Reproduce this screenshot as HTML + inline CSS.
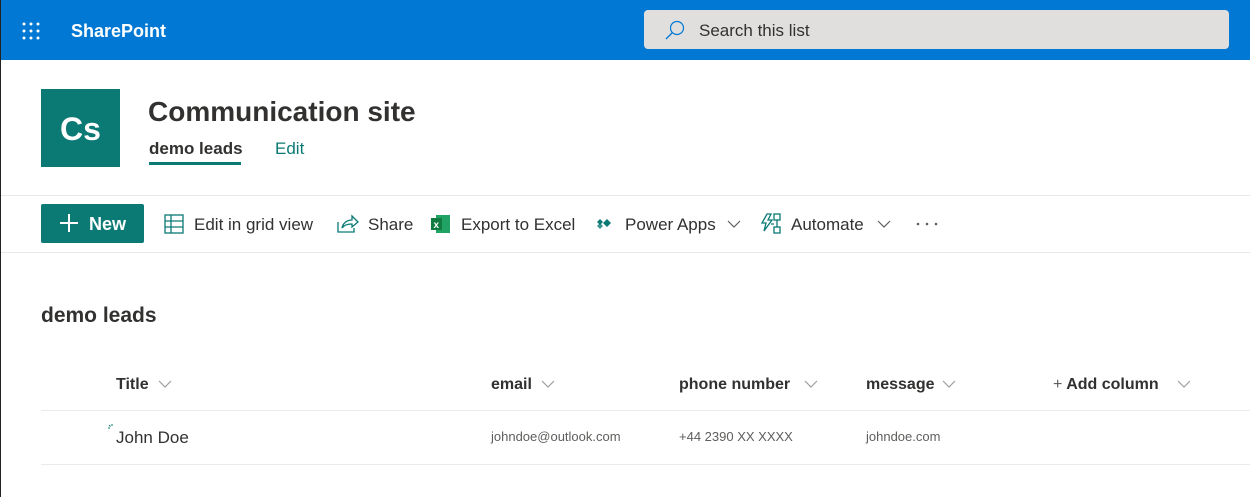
<!DOCTYPE html>
<html><head><style>
*{margin:0;padding:0;box-sizing:border-box}
body{width:1250px;height:497px;overflow:hidden;background:#fff;font-family:"Segoe UI","Liberation Sans",sans-serif;color:#323130;position:relative}
.top{position:absolute;left:0;top:0;width:1250px;height:60px;background:#0078d4}
.abs{position:absolute;white-space:nowrap}
.hr{position:absolute;left:0;width:1250px;height:1px;background:#e8e8e8}
.lb{position:absolute;left:0;top:0;width:1px;height:497px;background:#222;z-index:5}
.t{font-size:17px;color:#323130}
.h{font-size:16px;font-weight:600;color:#323130}
.c{font-size:13px;color:#605e5c}
</style></head><body>
<div class="top"></div>
<svg class="abs" style="left:22px;top:22px" width="18" height="18"><g fill="#fff"><circle cx="2" cy="2" r="1.5"/><circle cx="9" cy="2" r="1.5"/><circle cx="16" cy="2" r="1.5"/><circle cx="2" cy="9" r="1.5"/><circle cx="9" cy="9" r="1.5"/><circle cx="16" cy="9" r="1.5"/><circle cx="2" cy="16" r="1.5"/><circle cx="9" cy="16" r="1.5"/><circle cx="16" cy="16" r="1.5"/></g></svg>
<div class="abs" style="left:71px;top:21px;color:#fff;font-size:18px;font-weight:bold">SharePoint</div>
<div class="abs" style="left:644px;top:10px;width:585px;height:39px;background:#e1dfdd;border-radius:4px"></div>
<svg class="abs" style="left:664px;top:20px" width="22" height="22"><circle cx="13" cy="8" r="6.5" fill="none" stroke="#0078d4" stroke-width="1.2"/><line x1="8.5" y1="12.5" x2="2" y2="19" stroke="#0078d4" stroke-width="1.3"/></svg>
<div class="abs" style="left:699px;top:21px;font-size:17px;color:#323130">Search this list</div>
<div class="lb"></div>
<div class="abs" style="left:41px;top:89px;width:79px;height:78px;background:#0b7a75;color:#fff;font-size:32px;font-weight:600;text-align:center;line-height:80px">Cs</div>
<div class="abs" style="left:148px;top:96px;font-size:28px;font-weight:600">Communication site</div>
<div class="abs" style="left:149px;top:139px;font-size:17px;font-weight:600">demo leads</div>
<div class="abs" style="left:149px;top:162px;width:92px;height:3px;background:#0b7a75"></div>
<div class="abs" style="left:275px;top:139px;font-size:17px;color:#0b7a75">Edit</div>
<div class="hr" style="top:195px"></div>
<div class="hr" style="top:252px"></div>
<div class="abs" style="left:41px;top:204px;width:103px;height:39px;background:#0b7a75;border-radius:2px"></div>
<svg class="abs" style="left:60px;top:214px" width="18" height="18"><path d="M9 0V18M0 9H18" stroke="#fff" stroke-width="2"/></svg>
<div class="abs" style="left:89px;top:214px;color:#fff;font-size:18px;font-weight:bold">New</div>
<svg class="abs" style="left:164px;top:214px" width="20" height="20"><g fill="none" stroke="#0b7a75" stroke-width="1.3"><rect x="1" y="1" width="18" height="18"/><path d="M1 7H19M1 13H19M7 1V19"/></g></svg>
<div class="abs t" style="left:194px;top:215px">Edit in grid view</div>
<svg class="abs" style="left:337px;top:214px" width="22" height="20"><g fill="none" stroke="#0b7a75" stroke-width="1.3"><path d="M1 8V18H17V14"/><path d="M5 14C6 9 10 6 15 6V2L21 8 15 13V10C10 10 7 11 5 14Z"/></g></svg>
<div class="abs t" style="left:368px;top:215px">Share</div>
<svg class="abs" style="left:431px;top:215px" width="20" height="18"><rect x="5" y="0" width="14" height="18" fill="#21a366"/><rect x="0" y="3" width="11" height="12" fill="#107c41"/><text x="2.5" y="13" font-size="10" fill="#fff" font-family="Liberation Sans" font-weight="bold">x</text></svg>
<div class="abs t" style="left:461px;top:215px">Export to Excel</div>
<svg class="abs" style="left:596px;top:218px" width="16" height="12"><g fill="#0b7a75"><path d="M4 1L7 4 4 7 1 4Z"/><path d="M4 5L7 8 4 11 1 8Z" opacity=".8"/><path d="M11 1L15 5 11 9 7 5Z"/></g></svg>
<div class="abs t" style="left:625px;top:215px">Power Apps</div>
<svg class="abs" style="left:727px;top:220px" width="14" height="8"><path d="M1 1L7 7 13 1" fill="none" stroke="#605e5c" stroke-width="1.2"/></svg>
<svg class="abs" style="left:760px;top:213px" width="22" height="22"><g fill="none" stroke="#0b7a75" stroke-width="1.3"><path d="M7 1H11L8 7H12L4 18 6 10H2Z"/><rect x="14" y="1" width="6" height="6"/><rect x="14" y="14" width="6" height="6"/><path d="M17 7V14M11 11H14"/></g></svg>
<div class="abs t" style="left:791px;top:215px">Automate</div>
<svg class="abs" style="left:877px;top:220px" width="14" height="8"><path d="M1 1L7 7 13 1" fill="none" stroke="#605e5c" stroke-width="1.2"/></svg>
<svg class="abs" style="left:916px;top:222px" width="24" height="4"><g fill="#605e5c"><circle cx="2" cy="2" r="1.3"/><circle cx="11" cy="2" r="1.3"/><circle cx="20" cy="2" r="1.3"/></g></svg>
<div class="abs" style="left:41px;top:304px;font-size:21px;font-weight:600">demo leads</div>
<div class="abs h" style="left:116px;top:376px">Title</div>
<div class="abs h" style="left:491px;top:376px">email</div>
<div class="abs h" style="left:679px;top:376px">phone number</div>
<div class="abs h" style="left:866px;top:376px">message</div>
<div class="abs h" style="left:1053px;top:376px"><span style="font-weight:400;color:#605e5c">+</span> Add column</div>
<svg class="abs" style="left:158px;top:380px" width="14" height="8"><path d="M1 1L7 7 13 1" fill="none" stroke="#a19f9d" stroke-width="1.2"/></svg>
<svg class="abs" style="left:541px;top:380px" width="14" height="8"><path d="M1 1L7 7 13 1" fill="none" stroke="#a19f9d" stroke-width="1.2"/></svg>
<svg class="abs" style="left:804px;top:380px" width="14" height="8"><path d="M1 1L7 7 13 1" fill="none" stroke="#a19f9d" stroke-width="1.2"/></svg>
<svg class="abs" style="left:942px;top:380px" width="14" height="8"><path d="M1 1L7 7 13 1" fill="none" stroke="#a19f9d" stroke-width="1.2"/></svg>
<svg class="abs" style="left:1177px;top:380px" width="14" height="8"><path d="M1 1L7 7 13 1" fill="none" stroke="#a19f9d" stroke-width="1.2"/></svg>
<div class="abs" style="left:41px;top:410px;width:1209px;height:1px;background:#edebe9"></div>
<div class="abs" style="left:41px;top:464px;width:1209px;height:1px;background:#edebe9"></div>
<svg class="abs" style="left:107px;top:423px" width="10" height="10"><path d="M5 1V3M1 5H3M2 2L3.5 3.5" stroke="#0b7a75" stroke-width="1"/></svg>
<div class="abs t" style="left:116px;top:428px">John Doe</div>
<div class="abs c" style="left:491px;top:429px">johndoe@outlook.com</div>
<div class="abs c" style="left:679px;top:429px">+44 2390 XX XXXX</div>
<div class="abs c" style="left:866px;top:429px">johndoe.com</div>
</body></html>
